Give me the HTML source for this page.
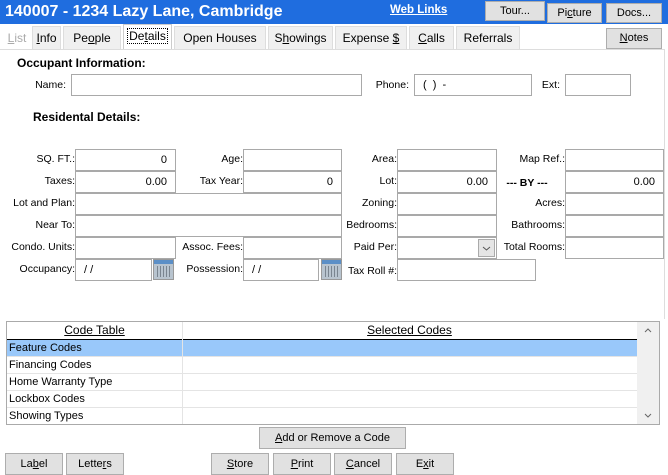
<!DOCTYPE html>
<html><head><style>
*{box-sizing:border-box;margin:0;padding:0}
body{width:668px;height:475px;background:#fff;font-family:"Liberation Sans",sans-serif;font-size:11px;color:#000;position:relative;overflow:hidden}
.a{position:absolute}
.hdr{left:0;top:0;width:668px;height:24px;background:#1f6ddf}
.btn{position:absolute;background:#e1e1e1;border:1px solid #adadad;box-shadow:inset 0 0 0 1px #e1e1e1;text-align:center;font-size:11px;line-height:19px;color:#000}
.tab{position:absolute;top:26px;height:23px;background:#f0f0f0;border:1px solid #ddd;border-bottom:none;text-align:center;line-height:22px;font-size:12px}
.inp{position:absolute;height:22px;border:1px solid #a9a9a9;background:#fff;font-size:11px;line-height:20px;padding:0 8px}
.r{text-align:right}
.lbl{position:absolute;font-size:10.5px;text-align:right;line-height:22px}
.cal{position:absolute;width:21px;height:21px;border:1px solid #999;background:linear-gradient(#5b8fc7 0 4px,#b8c4cf 4px);}
.cal:after{content:"";position:absolute;left:3px;top:6px;width:13px;height:11px;background:repeating-linear-gradient(90deg,#7a8590 0 1px,transparent 1px 3px)}
.row{position:absolute;left:8px;width:629px;height:17px;border-bottom:1px solid #e4e4e4;line-height:16px;padding-left:2px}
u{text-decoration:underline}
</style></head><body>
<div class="a hdr"></div>
<div class="a" style="left:5px;top:3px;color:#fff;font-weight:bold;font-size:16px">140007 - 1234 Lazy Lane, Cambridge</div>
<div class="a" style="left:390px;top:4px;color:#fff;font-weight:bold;font-size:11.5px;text-decoration:underline">Web Links</div>
<div class="btn" style="left:485px;top:1px;width:60px;height:20px">Tour...</div>
<div class="btn" style="left:547px;top:3px;width:55px;height:20px">Pi<u>c</u>ture</div>
<div class="btn" style="left:606px;top:3px;width:56px;height:20px">Docs...</div>

<div class="tab" style="left:3px;width:28px;color:#aaa;background:#fff;border-color:#fff"><u>L</u>ist</div>
<div class="tab" style="left:32px;width:29px"><u>I</u>nfo</div>
<div class="tab" style="left:63px;width:58px">Pe<u>o</u>ple</div>
<div class="tab" style="left:123px;width:49px;top:24px;height:26px;background:#fff;border-color:#ccc"><span style="outline:1px dotted #000;padding:0 1px">De<u>t</u>ails</span></div>
<div class="tab" style="left:174px;width:92px">Open Houses</div>
<div class="tab" style="left:268px;width:65px">S<u>h</u>owings</div>
<div class="tab" style="left:335px;width:72px">Expense <u>$</u></div>
<div class="tab" style="left:409px;width:45px"><u>C</u>alls</div>
<div class="tab" style="left:456px;width:64px">Referrals</div>
<div class="btn" style="left:606px;top:28px;width:56px;height:21px"><u>N</u>otes</div>
<div class="a" style="left:0;top:49px;width:665px;height:270px;border-top:1px solid #ddd;border-right:1px solid #ddd"></div>

<div class="a" style="left:17px;top:56px;font-weight:bold;font-size:12px">Occupant Information:</div>
<div class="lbl" style="left:20px;top:74px;width:46px">Name:</div>
<div class="inp" style="left:71px;top:74px;width:291px"></div>
<div class="lbl" style="left:360px;top:74px;width:49px">Phone:</div>
<div class="inp" style="left:414px;top:74px;width:118px">(&nbsp;&nbsp;)&nbsp;&nbsp;-</div>
<div class="lbl" style="left:530px;top:74px;width:30px">Ext:</div>
<div class="inp" style="left:565px;top:74px;width:66px"></div>
<div class="a" style="left:33px;top:110px;font-weight:bold;font-size:12px">Residental Details:</div>

<div class="lbl" style="left:0;top:148px;width:75px">SQ. FT.:</div>
<div class="inp r" style="left:75px;top:149px;width:101px">0</div>
<div class="lbl" style="left:176px;top:148px;width:67px">Age:</div>
<div class="inp" style="left:243px;top:149px;width:99px"></div>
<div class="lbl" style="left:342px;top:148px;width:55px">Area:</div>
<div class="inp" style="left:397px;top:149px;width:100px"></div>
<div class="lbl" style="left:497px;top:148px;width:68px">Map Ref.:</div>
<div class="inp" style="left:565px;top:149px;width:99px"></div>

<div class="lbl" style="left:0;top:170px;width:75px">Taxes:</div>
<div class="inp r" style="left:75px;top:171px;width:101px">0.00</div>
<div class="lbl" style="left:176px;top:170px;width:67px">Tax Year:</div>
<div class="inp r" style="left:243px;top:171px;width:99px">0</div>
<div class="lbl" style="left:342px;top:170px;width:55px">Lot:</div>
<div class="inp r" style="left:397px;top:171px;width:100px">0.00</div>
<div class="lbl" style="left:497px;top:172px;width:60px;text-align:center;font-weight:bold">--- BY ---</div>
<div class="inp r" style="left:565px;top:171px;width:99px">0.00</div>

<div class="lbl" style="left:0;top:192px;width:75px">Lot and Plan:</div>
<div class="inp" style="left:75px;top:193px;width:267px"></div>
<div class="lbl" style="left:342px;top:192px;width:55px">Zoning:</div>
<div class="inp" style="left:397px;top:193px;width:100px"></div>
<div class="lbl" style="left:497px;top:192px;width:68px">Acres:</div>
<div class="inp" style="left:565px;top:193px;width:99px"></div>

<div class="lbl" style="left:0;top:214px;width:75px">Near To:</div>
<div class="inp" style="left:75px;top:215px;width:267px"></div>
<div class="lbl" style="left:342px;top:214px;width:55px">Bedrooms:</div>
<div class="inp" style="left:397px;top:215px;width:100px"></div>
<div class="lbl" style="left:497px;top:214px;width:68px">Bathrooms:</div>
<div class="inp" style="left:565px;top:215px;width:99px"></div>

<div class="lbl" style="left:0;top:236px;width:75px">Condo. Units:</div>
<div class="inp" style="left:75px;top:237px;width:101px"></div>
<div class="lbl" style="left:176px;top:236px;width:67px">Assoc. Fees:</div>
<div class="inp" style="left:243px;top:237px;width:99px"></div>
<div class="lbl" style="left:342px;top:236px;width:55px">Paid Per:</div>
<div class="inp" style="left:397px;top:237px;width:100px"></div>
<div class="a" style="left:478px;top:239px;width:17px;height:18px;background:#e5e5e5;border:1px solid #aaa"><svg width="15" height="16"><path d="M4 7 L7.5 10 L11 7" stroke="#555" fill="none" stroke-width="1"/></svg></div>
<div class="lbl" style="left:497px;top:236px;width:68px">Total Rooms:</div>
<div class="inp" style="left:565px;top:237px;width:99px"></div>

<div class="lbl" style="left:0;top:258px;width:75px">Occupancy:</div>
<div class="inp" style="left:75px;top:259px;width:77px">/ /</div>
<div class="cal" style="left:153px;top:259px"></div>
<div class="lbl" style="left:176px;top:258px;width:67px">Possession:</div>
<div class="inp" style="left:243px;top:259px;width:76px">/ /</div>
<div class="cal" style="left:321px;top:259px"></div>
<div class="lbl" style="left:342px;top:260px;width:55px">Tax Roll #:</div>
<div class="inp" style="left:397px;top:259px;width:139px"></div>

<div class="a" style="left:6px;top:321px;width:654px;height:104px;border:1px solid #aaa"></div>
<div class="a" style="left:7px;top:322px;width:630px;height:18px;border-bottom:1px solid #000"></div>
<div class="a" style="left:7px;top:323px;width:175px;text-align:center;font-size:12px"><u>Code Table</u></div>
<div class="a" style="left:182px;top:323px;width:455px;text-align:center;font-size:12px"><u>Selected Codes</u></div>
<div class="a" style="left:637px;top:322px;width:22px;height:102px;background:#f0f0f0">
<svg width="22" height="102"><path d="M8 10 L11 7 L14 10" stroke="#666" fill="none"/><path d="M8 92 L11 95 L14 92" stroke="#666" fill="none"/></svg></div>
<div class="row" style="top:340px;left:7px;width:630px;background:#99c8fa">Feature Codes</div>
<div class="row" style="top:357px;left:7px;width:630px">Financing Codes</div>
<div class="row" style="top:374px;left:7px;width:630px">Home Warranty Type</div>
<div class="row" style="top:391px;left:7px;width:630px">Lockbox Codes</div>
<div class="row" style="top:408px;left:7px;width:630px;border:none">Showing Types</div>
<div class="a" style="left:182px;top:322px;width:1px;height:102px;background:#e4e4e4"></div>

<div class="btn" style="left:259px;top:427px;width:147px;height:22px;line-height:20px"><u>A</u>dd or Remove a Code</div>
<div class="btn" style="left:5px;top:453px;width:58px;height:22px;line-height:20px">La<u>b</u>el</div>
<div class="btn" style="left:66px;top:453px;width:58px;height:22px;line-height:20px">Lette<u>r</u>s</div>
<div class="btn" style="left:211px;top:453px;width:58px;height:22px;line-height:20px"><u>S</u>tore</div>
<div class="btn" style="left:273px;top:453px;width:58px;height:22px;line-height:20px"><u>P</u>rint</div>
<div class="btn" style="left:334px;top:453px;width:58px;height:22px;line-height:20px"><u>C</u>ancel</div>
<div class="btn" style="left:396px;top:453px;width:58px;height:22px;line-height:20px">E<u>x</u>it</div>
</body></html>
